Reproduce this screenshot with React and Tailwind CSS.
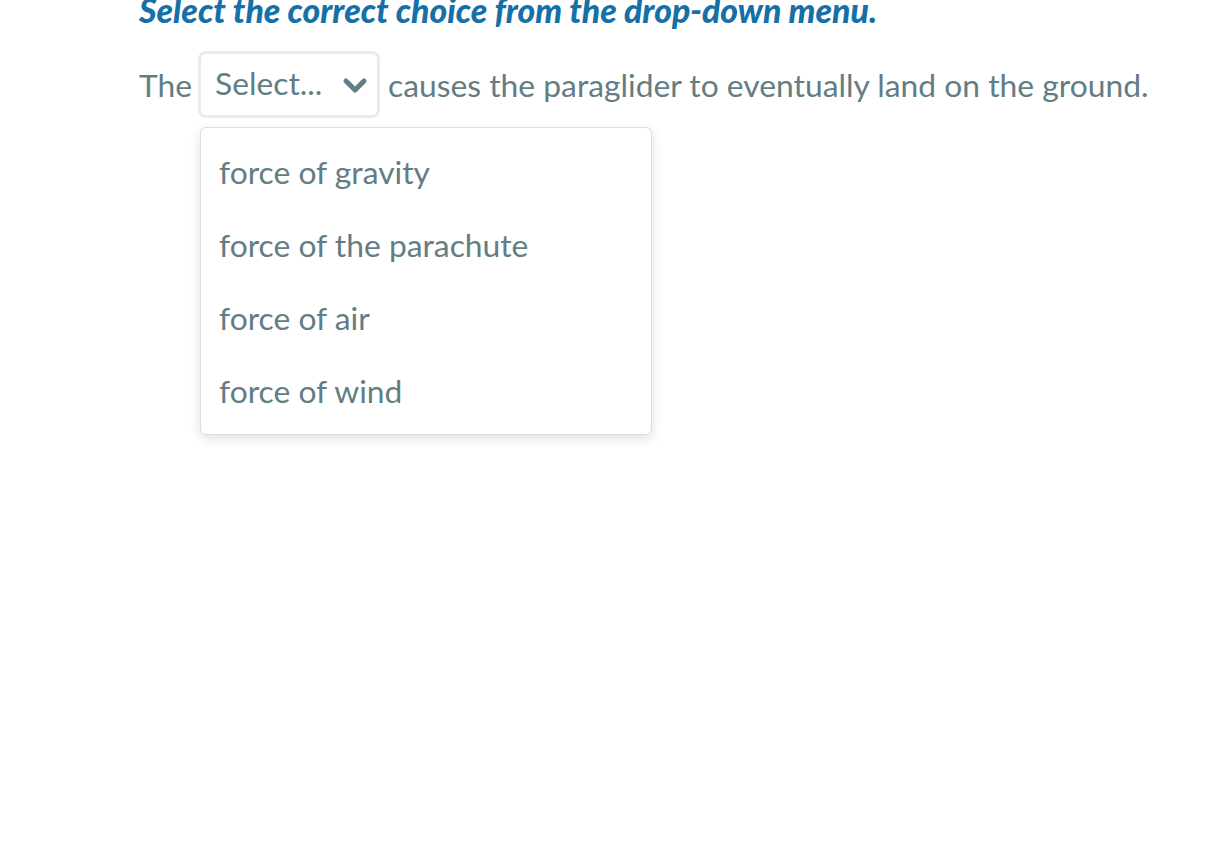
import React from 'react';

const options = ['force of gravity', 'force of the parachute', 'force of air', 'force of wind'];

export default function App() {
  return (
    <div className="min-h-[843px] bg-white pl-[139px] font-['Lato',sans-serif] text-[#627d84]">
      <h2 className="-mt-[10px] text-[33.8px] leading-[40px] font-black italic text-[#1670a8]">
        Select the correct choice from the drop-down menu.
      </h2>
      <div className="mt-[21px] flex items-center text-[31.8px] leading-[40px]">
        <span>The</span>
        <div className="relative ml-[6px] mr-[8px]">
          <div className="flex h-[67px] w-[182px] items-center justify-between rounded-[8px] border-[3px] border-[#ebebeb] pl-[14px] pr-[8px]">
            <span className="-mt-[3px]">Select...</span>
            <svg width="28" height="20" viewBox="0 0 28 20" className="text-[#627d84]">
              <path d="M5 6 L14 15 L23 6" fill="none" stroke="currentColor" strokeWidth="5" strokeLinecap="round" strokeLinejoin="round" />
            </svg>
          </div>
          <div className="absolute left-[2px] top-[76px] w-[452px] rounded-[6px] border border-[#dcdcdc] bg-white py-[7px] shadow-[0_4px_12px_rgba(0,0,0,0.12)]">
            {options.map((o) => (
              <div key={o} className="flex h-[73px] items-center px-[18px]">
                {o}
              </div>
            ))}
          </div>
        </div>
        <span>causes the paraglider to eventually land on the ground.</span>
      </div>
    </div>
  );
}
